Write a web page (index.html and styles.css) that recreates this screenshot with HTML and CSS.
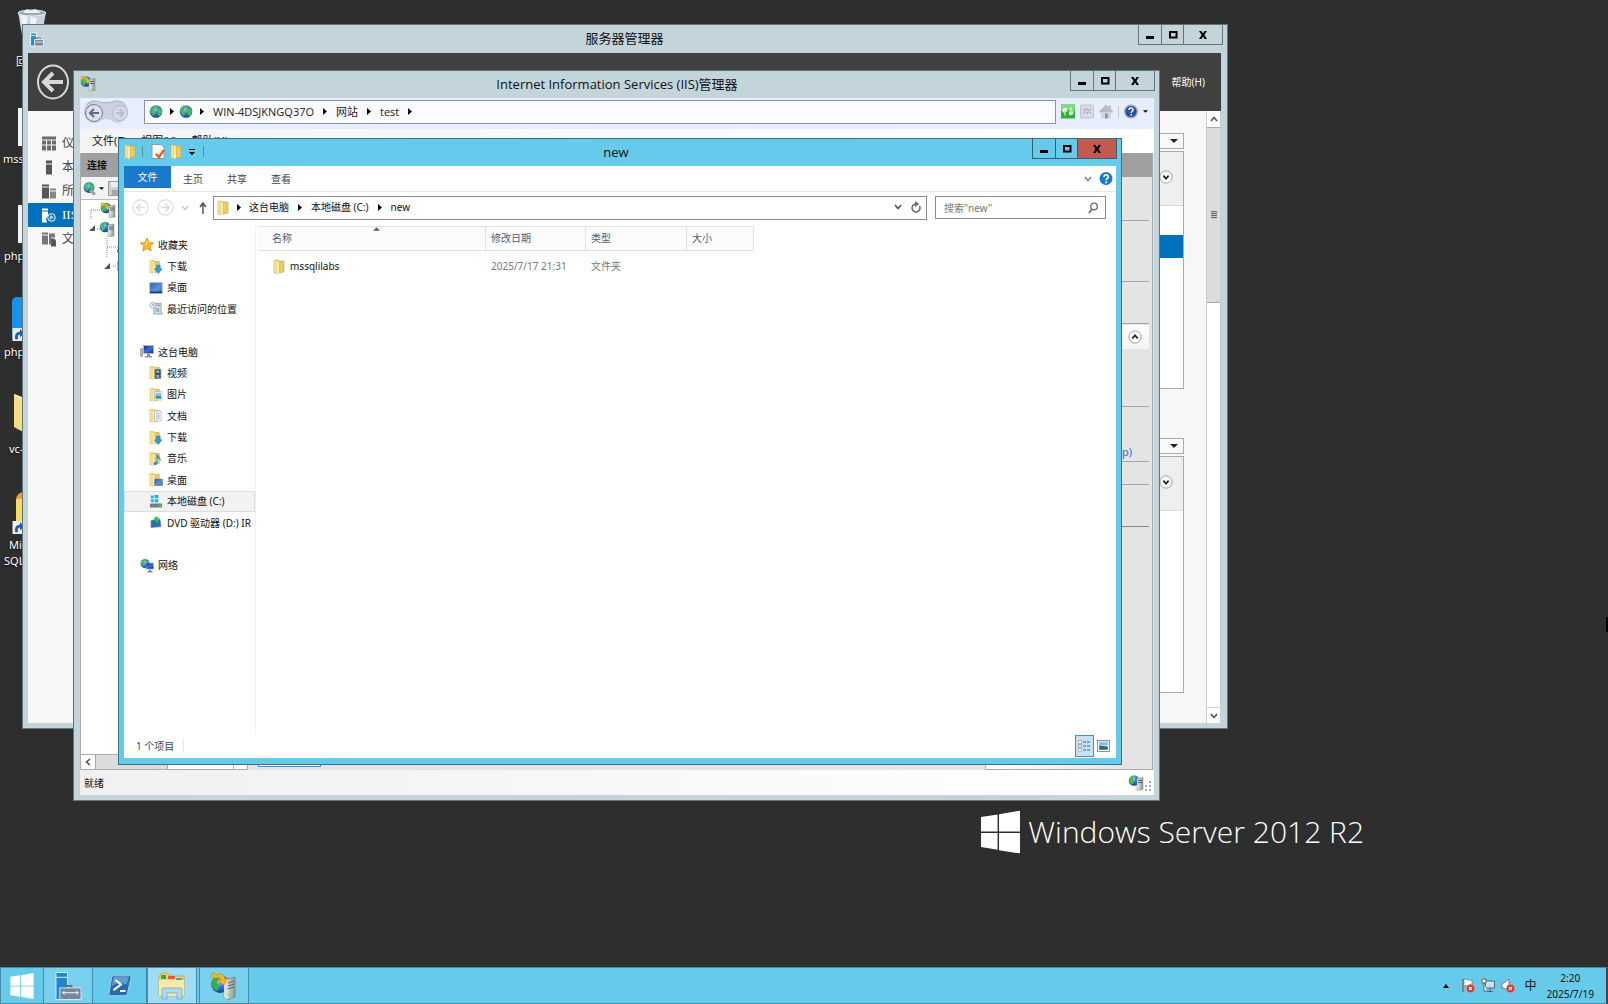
FILE: index.html
```html
<!DOCTYPE html>
<html lang="zh-CN">
<head>
<meta charset="utf-8">
<title>Windows Server 2012 R2</title>
<link rel="stylesheet" href="styles.css">
</head>
<body>
<svg class="defs" aria-hidden="true">
  <defs>
    <linearGradient id="gFolder" x1="0" y1="0" x2="1" y2="0"><stop offset="0" stop-color="#fdf0b0"/><stop offset="1" stop-color="#e2bd55"/></linearGradient>
    <radialGradient id="gGlobe" cx=".35" cy=".3" r=".8"><stop offset="0" stop-color="#9fe0ff"/><stop offset=".5" stop-color="#2f7fd0"/><stop offset="1" stop-color="#0b2f78"/></radialGradient>
    <linearGradient id="gSrv" x1="0" y1="0" x2="1" y2="0"><stop offset="0" stop-color="#f2f4f4"/><stop offset="1" stop-color="#8d9796"/></linearGradient>
    <linearGradient id="gScreen" x1="0" y1="0" x2="1" y2="1"><stop offset="0" stop-color="#0a1fa0"/><stop offset=".5" stop-color="#3f6fd8"/><stop offset="1" stop-color="#0c2a8c"/></linearGradient>
    <linearGradient id="gDesk" x1="0" y1="0" x2="1" y2="1"><stop offset="0" stop-color="#2f5fb4"/><stop offset=".6" stop-color="#5c93e0"/><stop offset="1" stop-color="#2f62b8"/></linearGradient>
    <symbol id="folder" viewBox="0 0 12 15"><path d="M1 1h4l1 1v12l-2 1-3-1z" fill="url(#gFolder)" stroke="#cfae52" stroke-width=".6"/><path d="M6 2h5v11l-5 1z" fill="#e9cb68" stroke="#c9a447" stroke-width=".6"/><path d="M4 3l2-1v12l-2 1z" fill="#fbeeb4"/></symbol>
    <symbol id="globe" viewBox="0 0 14 14"><circle cx="7" cy="7" r="6.300" fill="url(#gGlobe)"/><path d="M2 3c2-2 4-2 5-1 0 2-2 2-2 4 1 1 1 3 0 5-2-1-4-4-3-8zM9 4c2-1 3 0 4 2 0 3-1 4-3 6-1-2-2-3-1-4-1-2-1-3 0-4z" fill="#4dbb45"/></symbol>
    <symbol id="globesrv" viewBox="0 0 16 16"><circle cx="6" cy="6" r="5.300" fill="url(#gGlobe)"/><path d="M2 3c2-1 3-2 4-1-1 2-1 3-1 4 1 1 0 3-1 4-2-1-3-4-2-7z" fill="#4dbb45"/><path d="M9 4l6-1v12l-6 1z" fill="url(#gSrv)" stroke="#7d8584" stroke-width=".5"/><path d="M10 6h4M10 8h4" stroke="#59605f"/><circle cx="12" cy="14" r="1" fill="#7be02a"/></symbol>
    <symbol id="iis" viewBox="0 0 16 16"><use href="#globesrv" width="16" height="16"/><path d="M1 4V1h3v1c3 0 5 1 5 3h1L8 8 5 5h2c0-1-2-2-4-1z" fill="#f5b41d" stroke="#c98708" stroke-width=".3"/></symbol>
    <symbol id="sm" viewBox="0 0 14 14"><path d="M.5.5h6v13h-6z" fill="#2b8ad0" stroke="#e6f3fb"/><path d="M1 3h5" stroke="#bfe0f5"/><path d="M6.500 6.500V5.500h4v1" fill="none" stroke="#65798a"/><path d="M4.500 7h9v6.500h-9z" fill="#75899a" stroke="#f0f6fa" stroke-width=".8"/><path d="M5 9.500h8" stroke="#fff" stroke-width=".7"/></symbol>
    <symbol id="tri" viewBox="0 0 4 7"><path d="M0 0l4 3.500L0 7z"/></symbol>
    <symbol id="down" viewBox="0 0 8 6"><path d="M1 1l3 3.500L7 1" fill="none" stroke="currentColor" stroke-width="1.600"/></symbol>
    <symbol id="tridown" viewBox="0 0 8 4"><path d="M0 0h8L4 4z" fill="currentColor"/></symbol>
    <symbol id="min" viewBox="0 0 10 10"><path d="M1 6h8v3H1z"/></symbol>
    <symbol id="max" viewBox="0 0 10 10"><path d="M2 2h6.500v5.500H2z" fill="none" stroke="#000" stroke-width="2"/></symbol>
    <symbol id="cls" viewBox="0 0 10 10"><path d="M1 1h2.500l1.500 2.500L6.500 1H9L6.400 5 9 9H6.500L5 6.500 3.500 9H1l2.600-4z"/></symbol>
    <symbol id="circdown" viewBox="0 0 16 16"><circle cx="8" cy="8" r="7" fill="#fafafa" stroke="#999"/><path d="M5 6.500L8 10l3-3.500" fill="none" stroke="#222" stroke-width="2"/></symbol>
    <symbol id="shortcut" viewBox="0 0 14 14"><path d="M0 0h14v14H0z" fill="#e8eef4"/><path d="M3 12C2 7 4 4 8 4V1l5 5-5 4V7C6 7 5 9 6 12z" fill="#1c5ba5"/></symbol>
    <symbol id="ffilm" viewBox="0 0 15 15"><use href="#folder" width="12" height="15"/><path d="M6 4h7v10H6z" fill="#39474d"/><path d="M8 5h3v3H8zM8 10h3v3H8z" fill="#79b6d8"/><path d="M7 4v10M12.500 4v10" stroke="#cfd5d8" stroke-dasharray="1 1" stroke-width=".7"/></symbol>
    <symbol id="fpic" viewBox="0 0 15 15"><use href="#folder" width="12" height="15"/><path d="M6 4.500h8v9H6z" fill="#f4f8fa" stroke="#9ba9b0" stroke-width=".6"/><path d="M7 6h6v3H7z" fill="#7fc4e8"/><path d="M7 9h6v3H7z" fill="#3d8f82"/></symbol>
    <symbol id="fdoc" viewBox="0 0 15 15"><use href="#folder" width="12" height="15"/><path d="M6 2.500h7v11H6z" fill="#f7f9fb" stroke="#98a5ae" stroke-width=".6"/><path d="M7.500 5h4M7.500 7h4M7.500 9h4M7.500 11h4" stroke="#7faed4" stroke-width=".8"/></symbol>
    <symbol id="fdown" viewBox="0 0 15 15"><use href="#folder" width="12" height="15"/><path d="M8 6h4v4h2l-4 5-4-5h2z" fill="#2d9ae0" stroke="#1c6cae" stroke-width=".5"/></symbol>
    <symbol id="fmusic" viewBox="0 0 15 15"><use href="#folder" width="12" height="15"/><path d="M9 3c0 2 5 3 3 8 0-3-2-4-3-4v5c0 3-4 3-4 1s2-2 3-2V3z" fill="#2b8fd6"/></symbol>
    <symbol id="fdesk" viewBox="0 0 15 15"><use href="#folder" width="12" height="15"/><path d="M6 7h8.500v7H6z" fill="url(#gDesk)" stroke="#6d7f95" stroke-width=".6"/></symbol>
    <symbol id="desk" viewBox="0 0 15 15"><path d="M1 2.500h13v11H1z" fill="url(#gDesk)" stroke="#7b8da6" stroke-width=".8"/><path d="M1 12h13v1.500H1z" fill="#1d3050"/></symbol>
    <symbol id="star" viewBox="0 0 14 14"><path d="M7 .5l2 4.600 4.700.4-3.600 3.200 1.100 4.800L7 11l-4.200 2.500 1.100-4.800L.3 5.500 5 5.100z" fill="#ffb52e" stroke="#e08a18" stroke-width=".8"/><path d="M7 3l1 3-3 2z" fill="#ffe38a"/></symbol>
    <symbol id="recent" viewBox="0 0 15 15"><path d="M4 2h9v9l1.500 2.500H5V6z" fill="#d4dadd" stroke="#8d979c" stroke-width=".8"/><circle cx="4" cy="4" r="3" fill="#f4f6f7" stroke="#929b9f" stroke-width=".8"/><path d="M7 7h4v4H7z" fill="#8db9d2"/><path d="M4 2.500V4h1.500M8 4h4" stroke="#667" stroke-width=".7" fill="none"/></symbol>
    <symbol id="pc" viewBox="0 0 14 14"><path d="M.5 4h2v8h-2z" fill="#b2bab8" stroke="#76807d" stroke-width=".5"/><path d="M3.500 1h10v8h-10z" fill="url(#gScreen)" stroke="#a7b3be"/><path d="M7 9.500h3v2h2v1.500H5v-1.500h2z" fill="#8b949b"/></symbol>
    <symbol id="drive" viewBox="0 0 15 15"><path d="M2 1h3v3H2zM6 .6h4V4H6zM2 5h3v3H2zM6 5h4v3.400H6z" fill="#1bb3ee"/><path d="M1 10l2-1h9l2 1v4H1z" fill="#6f7f88"/><path d="M1 10l2-1.500h9L14 10z" fill="#c5ced2"/><circle cx="12" cy="12" r="1" fill="#5ff04c"/></symbol>
    <symbol id="dvd" viewBox="0 0 15 15"><path d="M2 5l10-1 1 8-11 1z" fill="#2e6cae" stroke="#8aa9c8" stroke-width=".6"/><path d="M5 5c0-3 2-4 5-4l-1 2h3L8 8 6 4z" fill="#39c24b"/></symbol>
    <symbol id="net" viewBox="0 0 14 14"><use href="#globe" width="10" height="10"/><path d="M6 4.500h7.500v6H6z" fill="url(#gScreen)" stroke="#9cb0c8" stroke-width=".6"/><path d="M9 11h2v1.500h1.500V14h-5v-1.500H9z" fill="#7e8c98"/></symbol>
    <symbol id="winlogo" viewBox="0 0 40 44"><path d="M0 6.500L17 4v17.500H0zM18.500 3.800L40 0v21.500H18.500zM0 23h17v17.300L0 37.500zM18.500 23H40v21l-21.500-3.400z" fill="#fff"/></symbol>
    <symbol id="err" viewBox="0 0 9 9"><circle cx="4.500" cy="4.500" r="4.200" fill="#d8342b" stroke="#f3b1ad" stroke-width=".5"/><path d="M3 3l3 3M6 3L3 6" stroke="#fff" stroke-width="1.200"/></symbol>
    <symbol id="help" viewBox="0 0 14 14"><circle cx="7" cy="7" r="6.500" fill="#1979ca"/><path d="M5 5.500C5 2.500 9.300 2.700 9.300 5.200 9.300 6.800 7.200 7 7.200 8.800" fill="none" stroke="#fff" stroke-width="1.600"/><path d="M6.300 10h1.800v1.700H6.300z" fill="#fff"/></symbol>
    <symbol id="arrowl" viewBox="0 0 16 16"><circle cx="8" cy="8" r="7.200" fill="none" stroke="currentColor" stroke-width="1.100"/><path d="M12 8H5M8 4.500L4.500 8 8 11.500" fill="none" stroke="currentColor" stroke-width="1.600"/></symbol>
  </defs>
</svg>

<main class="desktop">
  <div class="shortcut s1"><svg class="bin" viewBox="0 0 30 44"><path d="M1 3l6 34h16l6-34z" fill="#c4d3df"/><path d="M3 5l4 28 4-25zM13 8l2 28 5-27z" fill="#eef4f8"/><ellipse cx="15" cy="4" rx="14" ry="3" fill="#9aa9b3" stroke="#edf2f5"/><path d="M6 4l4-4 4 2 4-2 6 4z" fill="#eef1f3"/></svg><span>回</span></div>
  <div class="shortcut s2"><i class="paper"></i><span>mss</span></div>
  <div class="shortcut s3"><i class="paper"></i><span>php</span></div>
  <div class="shortcut s4"><i class="blueapp"></i><svg class="lnk"><use href="#shortcut"/></svg><span>php</span></div>
  <div class="shortcut s5"><svg class="bigfolder" viewBox="0 0 20 44"><path d="M0 0l20 8v36L0 33z" fill="#f4dc84"/><path d="M0 0l20 8v4L3 3z" fill="#fff2bd"/></svg><span>vc-</span></div>
  <div class="shortcut s6"><i class="sqlapp"></i><svg class="lnk"><use href="#shortcut"/></svg><span>Mic</span><span class="second">SQL</span></div>
  <i class="edge-mark"></i>
  <div class="brand"><svg viewBox="0 0 40 44"><use href="#winlogo"/></svg><span>Windows Server 2012 R2</span></div>

  <section class="window manager">
    <header class="titlebar">
      <div class="lead"><svg class="i14"><use href="#sm"/></svg></div>
      <h1>服务器管理器</h1>
      <div class="caption"><button aria-label="最小化"><svg><use href="#min"/></svg></button><button aria-label="最大化"><svg><use href="#max"/></svg></button><button class="close" aria-label="关闭"><svg><use href="#cls"/></svg></button></div>
    </header>
    <div class="mbanner">
      <button class="mback" aria-label="返回"><svg viewBox="0 0 34 36"><ellipse cx="17" cy="18" rx="15" ry="16.500" fill="none" stroke="#d8d8d8" stroke-width="2"/><path d="M27 18H9M17 9l-9 9 9 9" fill="none" stroke="#d8d8d8" stroke-width="4"/></svg></button>
      <button class="mhelp">帮助(H)</button>
    </div>
    <div class="mbody">
      <nav class="mside">
        <a href="#d"><svg viewBox="0 0 14 14"><path d="M0 0h14v3H0zM0 4h4v4H0zM5 4h4v4H5zM10 4h4v4h-4zM0 9h4v5H0zM5 9h4v5H5zM10 9h4v5h-4z" fill="#6b6b6b"/></svg>仪</a>
        <a href="#l"><svg viewBox="0 0 14 14"><path d="M4 0h6v3H4zM4 4h6v10H4z" fill="#555"/></svg>本</a>
        <a href="#a"><svg viewBox="0 0 14 14"><path d="M0 0h7v2H0zM0 3h7v11H0z" fill="#555"/><path d="M8 4h6v2H8zM8 7h6v7H8z" fill="#888"/></svg>所</a>
        <a href="#i" class="on"><svg viewBox="0 0 14 14"><path d="M0 0h6v2H0zM0 3h6v4L4 10l1 4H0z" fill="#fff"/><circle cx="9.500" cy="9" r="3.800" fill="none" stroke="#fff"/><path d="M8 10c0-3 3-3 3 0M9 7v4" stroke="#fff" fill="none"/></svg><b>IIS</b></a>
        <a href="#f"><svg viewBox="0 0 14 14"><path d="M0 0h6v2H0zM0 3h6v9H0zM7 1h6v4H9v7H7z" fill="#777"/><path d="M9 6h3l2 2v6H9z" fill="#555"/></svg>文</a>
      </nav>
      <div class="mtiles">
        <div class="combo"><svg><use href="#tridown"/></svg></div>
        <div class="tile first"><div class="thead"><svg><use href="#circdown"/></svg></div><div class="tsel"></div></div>
        <div class="combo later"><svg><use href="#tridown"/></svg></div>
        <div class="tile"><div class="thead"><svg><use href="#circdown"/></svg></div></div>
      </div>
      <div class="vscroll">
        <button aria-label="上"><svg class="flip"><use href="#down"/></svg></button>
        <div class="thumb"><i></i></div>
        <button class="end" aria-label="下"><svg><use href="#down"/></svg></button>
      </div>
    </div>
  </section>

  <section class="window iiswin">
    <header class="titlebar">
      <div class="lead"><svg class="i16"><use href="#iis"/></svg></div>
      <h1>Internet Information Services (IIS)管理器</h1>
      <div class="caption"><button aria-label="最小化"><svg><use href="#min"/></svg></button><button aria-label="最大化"><svg><use href="#max"/></svg></button><button class="close" aria-label="关闭"><svg><use href="#cls"/></svg></button></div>
    </header>
    <div class="inav">
      <svg class="travel" viewBox="0 0 46 26"><path d="M1 12C1 3 8 0 15 2c5 2 11 2 16 0 8-2 14 2 14 10 0 8-6 12-11 12-4 0-6-4-11-4s-7 4-11 4C6 24 1 20 1 12z" fill="#ccd1e2"/><path d="M4 6C8 1 13 2 17 3c4 1 8 1 12 0 5-2 10-1 13 4" stroke="#aab0c4" fill="none"/><circle cx="11" cy="14" r="8.500" fill="#dde1ea" stroke="#747c8b"/><circle cx="37" cy="14" r="7.500" fill="#d4d8e6" stroke="#b4bacb"/><path d="M16 14H8M11 10l-4 4 4 4" stroke="#646b75" stroke-width="2" fill="none"/><path d="M33 14h7M37 10.500l3.500 3.500-3.500 3.500" stroke="#b0b5c4" stroke-width="1.500" fill="none"/></svg>
      <div class="iaddr"><svg class="i14"><use href="#globe"/></svg><svg class="tri"><use href="#tri"/></svg><svg class="i14"><use href="#globe"/></svg><svg class="tri"><use href="#tri"/></svg><span class="host">WIN-4DSJKNGQ37O</span><svg class="tri"><use href="#tri"/></svg><span>网站</span><svg class="tri"><use href="#tri"/></svg><span>test</span><svg class="tri"><use href="#tri"/></svg></div>
      <div class="itools">
        <svg class="i14" viewBox="0 0 14 14"><path d="M0 0h14v14H0z" fill="#26b62d"/><path d="M0 0h14v6H0z" fill="#7fdc7a"/><path d="M2 8V6c0-2 3-3 4-1M4 6v5M2 7l2-2 2 2M12 6v2c0 2-3 3-4 1M10 3v6M8 7l2 3 2-3" fill="none" stroke="#fff" stroke-width="1.100"/></svg>
        <svg class="i14" viewBox="0 0 14 14"><rect x=".5" y=".5" width="13" height="13" rx="1" fill="#d9dbe0" stroke="#c2c5cc"/><path d="M3 4l4 5M7 4L3 9M7 4l4 5M11 4L7 9" stroke="#aeb1b8" stroke-width="1.200"/></svg>
        <svg class="i14" viewBox="0 0 14 14"><path d="M0 7l7-7 3 3V1h2v4l2 2v1H0z" fill="#b8bbc2"/><path d="M2 8h10v6H2z" fill="#d2d4d9"/><path d="M6 9h3v5H6z" fill="#96999f"/></svg>
        <i></i>
        <svg class="i14" viewBox="0 0 14 14"><circle cx="7" cy="7" r="6.300" fill="#2450b4" stroke="#a4a8b2" stroke-width="1.400"/><path d="M5 5.500C5 3 9 3 9 5.300 9 7 7.200 7 7.200 8.500" fill="none" stroke="#fff" stroke-width="1.500"/><path d="M6.400 9.500h1.600V11H6.400z" fill="#fff"/></svg>
        <svg class="dd"><use href="#tridown"/></svg>
      </div>
    </div>
    <div class="imenu"><span>文件(F)</span><span>视图(V)</span><span>帮助(H)</span></div>
    <div class="ibody">
      <div class="conn">
        <h2>连接</h2>
        <div class="ctool"><svg class="i14" viewBox="0 0 14 14"><use href="#globe" width="12" height="12"/><path d="M7 9l5 4" stroke="#9ba4b5" stroke-width="3"/></svg><svg class="dd"><use href="#tridown"/></svg><svg class="save" viewBox="0 0 15 15"><path d="M.5.5h14v14H.5z" fill="#cfcfcf" stroke="#999"/><path d="M3 1h9v5H3z" fill="#eee"/><path d="M4 9h7v5H4z" fill="#a5a5a5"/></svg></div>
        <svg class="tree" viewBox="0 0 38 90"><path d="M10 10h10M10 10v10M16 29h4M26 38v20M26 47h12M32 66h5" stroke="#888" stroke-dasharray="1 1" fill="none"/><use href="#iis" x="19" y="2" width="16" height="16"/><use href="#globesrv" x="18" y="21" width="16" height="16"/><path d="M14 25v6H8zM29 63v6h-6z" fill="#555"/><circle cx="38" cy="51" r="2" fill="#d33"/><path d="M36 61h3v10h-3z" fill="#d5b75c"/></svg>
        <div class="hscroll"><button aria-label="左"><svg class="left"><use href="#down"/></svg></button><i></i><b></b></div>
      </div>
      <div class="imid"><div class="viewtab"></div></div>
      <div class="actions">
        <h2></h2>
        <div class="alist">
          <hr class="a1"><hr class="a2"><hr class="a3">
          <div class="agroup"><svg><use href="#circdown"/></svg></div>
          <hr class="a4"><a href="#help">p)</a><hr class="a5"><hr class="a6"><hr class="a7">
        </div>
      </div>
    </div>
    <footer class="istatus"><span>就绪</span><svg class="i16"><use href="#globesrv"/></svg><svg class="grip" viewBox="0 0 8 10"><path d="M5 0h2v2H5zM1 4h2v2H1zM5 4h2v2H5zM1 8h2v2H1zM5 8h2v2H5z" fill="#aaa"/></svg></footer>
  </section>

  <section class="window explorer">
    <header class="titlebar">
      <div class="lead quick"><svg class="fold"><use href="#folder"/></svg><i></i><svg class="i14" viewBox="0 0 14 15"><path d="M1 .5h9l3 3v11H1z" fill="#fff" stroke="#8b9aa5"/><path d="M5 10l3 3 5-7" fill="none" stroke="#e0633a" stroke-width="2.500"/></svg><svg class="fold"><use href="#folder"/></svg><svg class="qdd" viewBox="0 0 6 6"><path d="M0 0h6v1H0zM0 3h6L3 6z"/></svg><i></i></div>
      <h1>new</h1>
      <div class="caption"><button aria-label="最小化"><svg><use href="#min"/></svg></button><button aria-label="最大化"><svg><use href="#max"/></svg></button><button class="close" aria-label="关闭"><svg><use href="#cls"/></svg></button></div>
    </header>
    <div class="ribbon"><button class="file">文件</button><button>主页</button><button>共享</button><button>查看</button><div class="rright"><svg class="chev"><use href="#down"/></svg><svg class="i14"><use href="#help"/></svg></div></div>
    <div class="eaddr">
      <svg class="nb"><use href="#arrowl"/></svg><svg class="nb rev"><use href="#arrowl"/></svg><svg class="chev faint"><use href="#down"/></svg>
      <svg class="up" viewBox="0 0 8 12"><path d="M4 12V2M1 5l3-4 3 4" fill="none" stroke="#555" stroke-width="1.500"/></svg>
      <div class="path"><svg class="fold"><use href="#folder"/></svg><svg class="tri"><use href="#tri"/></svg><span>这台电脑</span><svg class="tri"><use href="#tri"/></svg><span>本地磁盘 (C:)</span><svg class="tri"><use href="#tri"/></svg><span>new</span><svg class="chev pushed"><use href="#down"/></svg><svg class="refresh" viewBox="0 0 10 12"><path d="M8.500 5A4 4 0 1 1 5 3" fill="none" stroke="#666" stroke-width="1.500"/><path d="M4 0l4 3-4 3z" fill="#666"/></svg></div>
      <label class="search"><input type="text" placeholder='搜索"new"' aria-label="搜索"><svg viewBox="0 0 10 12"><circle cx="6" cy="4.500" r="3.300" fill="none" stroke="#666" stroke-width="1.300"/><path d="M4 7L1 11" stroke="#666" stroke-width="1.600"/></svg></label>
    </div>
    <div class="ebody">
      <nav class="places"><div class="plist">
        <a class="top" href="#p"><svg><use href="#star"/></svg>收藏夹</a>
        <a href="#p"><svg><use href="#fdown"/></svg>下载</a>
        <a href="#p"><svg><use href="#desk"/></svg>桌面</a>
        <a href="#p"><svg><use href="#recent"/></svg>最近访问的位置</a>
        <i></i>
        <a class="top" href="#p"><svg><use href="#pc"/></svg>这台电脑</a>
        <a href="#p"><svg><use href="#ffilm"/></svg>视频</a>
        <a href="#p"><svg><use href="#fpic"/></svg>图片</a>
        <a href="#p"><svg><use href="#fdoc"/></svg>文档</a>
        <a href="#p"><svg><use href="#fdown"/></svg>下载</a>
        <a href="#p"><svg><use href="#fmusic"/></svg>音乐</a>
        <a href="#p"><svg><use href="#fdesk"/></svg>桌面</a>
        <a class="sel" href="#p"><svg><use href="#drive"/></svg>本地磁盘 (C:)</a>
        <a href="#p"><svg><use href="#dvd"/></svg>DVD 驱动器 (D:) IR</a>
        <i></i>
        <a class="top" href="#p"><svg><use href="#net"/></svg>网络</a>
      </div></nav>
      <div class="files">
        <table>
          <thead><tr><th class="c1">名称<svg class="sort"><use href="#tridown"/></svg></th><th class="c2">修改日期</th><th class="c3">类型</th><th class="c4">大小</th></tr></thead>
          <tbody><tr><td class="name"><svg class="fold"><use href="#folder"/></svg>mssqlilabs</td><td>2025/7/17 21:31</td><td>文件夹</td><td></td></tr></tbody>
        </table>
      </div>
    </div>
    <footer class="estatus"><span>1 个项目</span><div class="views"><button class="on" aria-label="详细信息"><svg viewBox="0 0 13 12"><path d="M.5.5h3v3h-3zM.5 4.500h3v3h-3zM.5 8.500h3v3h-3z" fill="#fff" stroke="#999" stroke-width=".7"/><path d="M1.500 5.500h1v1h-1z" fill="#d44"/><path d="M5 2h3M9 2h3M5 6h3M9 6h3M5 10h3M9 10h3" stroke="#4c6078"/></svg></button><button aria-label="大图标"><svg viewBox="0 0 12 11"><path d="M.5.5h11v10H.5z" fill="#fff" stroke="#8695a8"/><path d="M2 2h8v3H2z" fill="#7cc0ec"/><path d="M2 5l8 1v3H2z" fill="#2d6d63"/></svg></button></div></footer>
  </section>

  <footer class="taskbar">
    <button class="t-start" aria-label="开始"><svg viewBox="0 0 40 44"><use href="#winlogo"/></svg></button>
    <button class="t-sm" aria-label="服务器管理器"><svg viewBox="0 0 28 30"><path d="M1 1h12v28H1z" fill="#1d86d8" stroke="#d8effb"/><path d="M1 6h12" stroke="#d8effb"/><path d="M11 17v-2h6v2" fill="none" stroke="#5f7386" stroke-width="2"/><path d="M5 17h22v12H5z" fill="#75899c" stroke="#d8e8f0"/><path d="M8 22h16M10 20l-2 2 2 2M22 20l2 2-2 2" stroke="#fff" fill="none"/></svg></button>
    <button class="t-ps" aria-label="PowerShell"><svg viewBox="0 0 26 24"><path d="M6 1h17q2 0 2 2l-4 18q-1 2-3 2H3q-2 0-2-2L4 3q1-2 2-2z" fill="#2a6bb0" stroke="#a7cfe8"/><path d="M6 2h17l-3 9C14 8 8 9 4 13z" fill="#5d9dd2"/><path d="M8 6l6 5-8 6M13 18h6" stroke="#fff" stroke-width="2.200" fill="none"/></svg></button>
    <button class="t-ex on" aria-label="文件资源管理器"><svg viewBox="0 0 28 28"><path d="M1 4l3-3h6l2 3h14v20H1z" fill="#f0cf70" stroke="#c79e3c" stroke-width=".7"/><path d="M3 3h5v4H3z" fill="#2fae4a"/><path d="M10 4h7v3h-7z" fill="#e8573f"/><path d="M18 6h6v3h-6z" fill="#3da4ea"/><path d="M1 8h25v16H1z" fill="#fbe9a3"/><path d="M4 27V18q0-2 2-2h16q2 0 2 2v9h-5v-6H9v6z" fill="#a9dcf4" stroke="#5ca7cc" stroke-width=".7"/></svg></button>
    <button class="t-iis" aria-label="IIS"><svg viewBox="0 0 28 30"><circle cx="10" cy="13" r="9" fill="url(#gGlobe)"/><path d="M3 8c2-3 5-3 7-2 0 3-3 3-3 6 2 2 2 5 0 8-4-2-6-7-4-12z" fill="#3fae3c"/><path d="M14 9l11-3v20l-8 3-3-3z" fill="url(#gSrv)" stroke="#747b7b" stroke-width=".7"/><path d="M14 9l3 1v19l-3-3z" fill="#d9dedf"/><path d="M18 12l6-2M18 15l6-2M18 18l6-2" stroke="#5b6363"/><circle cx="20" cy="24" r="1.200" fill="#77df36"/><path d="M1 6l2-5 3 3c4-2 8-1 9 4l3-1-4 7-6-4 3-1c-1-3-3-3-5-2z" fill="#f6b722" stroke="#c98809" stroke-width=".6"/></svg></button>
    <div class="tray">
      <svg class="trup" viewBox="0 0 6 4"><path d="M3 0l3 4H0z"/></svg>
      <svg class="i14" viewBox="0 0 14 15"><path d="M2 1v13" stroke="#777" stroke-width="1.500"/><path d="M3 1c3 0 4 2 8 1v6C8 9 6 7 3 8z" fill="#fff" stroke="#777" stroke-width=".7"/><use href="#err" x="5" y="6" width="9" height="9"/></svg>
      <svg class="i14" viewBox="0 0 14 15"><path d="M4.500 3h9v7h-9z" fill="#bfe7f7" stroke="#54656e"/><path d="M1 1h4v4H1zM3 5v8h3M9 10v3M6 13.500h6" fill="#fff" stroke="#54656e"/></svg>
      <svg class="i14" viewBox="0 0 14 15"><path d="M1 5h2l5-4v13l-5-4H1z" fill="#fff" stroke="#667" stroke-width=".8"/><use href="#err" x="5" y="6" width="9" height="9"/></svg>
      <span class="ime">中</span>
      <time><span>2:20</span><span>2025/7/19</span></time>
    </div>
  </footer>
</main>
</body>
</html>
```
FILE: styles.css
```css
* { box-sizing: border-box; }
body { margin: 0; font: 10px/14px "Noto Sans", "Noto Sans CJK SC", sans-serif; color: #111; }
button { font: inherit; padding: 0; margin: 0; border: 0; background: none; color: inherit; display: flex; align-items: center; justify-content: center; }
a { color: inherit; text-decoration: none; }
h1, h2 { margin: 0; font-weight: 400; }
svg { display: block; flex: none; }
span, a, h1, h2 { white-space: nowrap; }
.defs { position: absolute; width: 0; height: 0; }
.i14 { width: 14px; height: 15px; }
.i16 { width: 16px; height: 17px; }
.tri { width: 4px; height: 7px; }
.fold { width: 12px; height: 15px; }
.chev { width: 8px; height: 6px; color: #888; }
.dd { width: 5px; height: 3px; color: #000; }

.desktop { position: relative; height: 100vh; overflow: hidden; background: #2e2e2e; }

/* Desktop shortcuts */
.shortcut { position: absolute; left: 0; width: 60px; height: 88px; color: #fff; font-size: 11px; text-shadow: 0 1px 2px #000; }
.shortcut > * { position: absolute; }
.shortcut span { top: 62px; left: 4px; }
.shortcut .second { top: 78px; }
.s1 { top: -7px; } .s2 { top: 90px; } .s3 { top: 187px; } .s4 { top: 283px; } .s5 { top: 380px; } .s6 { top: 476px; }
.s1 span { left: 16px; } .s5 span, .s6 span { left: 9px; } .s6 .second { left: 4px; } .s2 span { left: 3px; }
.bin { left: 17px; top: 16px; width: 30px; height: 44px; }
.paper { left: 18px; top: 18px; width: 28px; height: 38px; background: #f4f4f4; }
.blueapp { left: 12px; top: 14px; width: 40px; height: 44px; border-radius: 5px; background: #1793ea; }
.sqlapp { left: 16px; top: 16px; width: 30px; height: 34px; border-radius: 8px 8px 0 0; background: linear-gradient(#f39b43 6px, #f8dc62 8px); }
.lnk { left: 12px; top: 45px; width: 14px; height: 13px; }
.bigfolder { left: 14px; top: 14px; width: 20px; height: 44px; }
.edge-mark { position: absolute; right: 0; bottom: 372px; width: 2px; height: 15px; background: #000; }
.brand { position: absolute; right: 244px; bottom: 149px; display: flex; align-items: center; gap: 8px; color: #fff; font-family: "Open Sans", sans-serif; font-size: 30px; font-weight: 300; line-height: 46px; }
.brand svg { width: 39px; height: 44px; }

/* Window frame */
.window { position: absolute; display: flex; flex-direction: column; border: 1px solid #63747b; background: #c3d5db; padding: 0 5px 5px; }
.manager { left: 22px; top: 24px; right: 380px; bottom: 275px; padding-right: 6px; }
.iiswin { left: 73px; top: 70px; right: 448px; bottom: 203px; padding-left: 6px; }
.explorer { left: 118px; top: 138px; right: 486px; bottom: 239px; background: #66caea; border-color: #3f6f80; padding-bottom: 6px; }
.titlebar { flex: none; height: 27px; display: grid; grid-template-columns: 1fr auto 1fr; align-items: center; }
.manager .titlebar { height: 28px; }
.titlebar h1 { font-family: "Open Sans", "Noto Sans CJK SC", sans-serif; font-size: 13px; line-height: 20px; padding-bottom: 2px; }
.explorer h1 { padding-right: 8px; }
.lead { display: flex; align-items: center; padding-left: 2px; }
.iiswin .lead { padding: 0 0 2px; }
.quick { padding: 0 0 2px; }
.quick i { width: 1px; height: 11px; background: #4c8fa8; margin: 0 8px 0 6px; }
.quick .i14 { margin-right: 5px; }
.qdd { width: 6px; height: 6px; margin: 0 2px 0 7px; }
.caption { justify-self: end; align-self: start; display: flex; height: 20px; border: 1px solid #63747b; border-top: 0; margin-right: -1px; }
.manager .caption { margin-right: -2px; }
.caption button { width: 23px; border-right: 1px solid #63747b; }
.caption button:nth-child(2) { width: 22px; }
.caption .close { width: 38px; border-right: 0; }
.caption svg { width: 10px; height: 10px; }
.explorer .caption { border-color: #36606f; }
.explorer .caption button { border-color: #36606f; }
.explorer .close { background: #c25a50; }

/* Server manager */
.mbanner { flex: none; height: 58px; background: #404040; display: flex; align-items: center; justify-content: space-between; padding: 0 16px 0 8px; color: #fff; }
.mback svg { width: 34px; height: 36px; }
.mhelp { font-size: 10px; }
.mbody { flex: 1; min-height: 0; display: flex; background: #f7f7f7; }
.mside { width: 180px; padding-top: 20px; font-size: 12px; color: #444; }
.mside a { display: flex; align-items: center; gap: 6px; height: 24px; padding-left: 14px; }
.mside svg { width: 14px; height: 15px; }
.mside b { font: 13px "Liberation Serif", serif; }
.mside .on { background: #0072bc; color: #fff; }
.mtiles { flex: 1; padding: 22px 22px 30px 0; display: flex; flex-direction: column; }
.combo { flex: none; height: 16px; border: 1px solid #aaa; background: #f9f9f9; display: flex; justify-content: flex-end; align-items: center; padding-right: 5px; margin-bottom: 2px; color: #222; }
.combo.later { margin-top: 49px; }
.combo svg { width: 8px; height: 4px; }
.tile { flex: 1; min-height: 0; border: 1px solid #aaa; background: #fff; }
.tile.first { flex: none; height: 238px; }
.thead { height: 54px; background: #efefef; border-bottom: 1px solid #ddd; display: flex; align-items: center; justify-content: flex-end; padding: 0 10px 4px 0; }
.thead svg { width: 14px; height: 16px; }
.tsel { margin-top: 29px; height: 23px; background: #0072bc; }
.vscroll { width: 15px; display: flex; flex-direction: column; background: #fff; border: 1px solid #ccc; border-width: 0 1px; }
.vscroll button { height: 16px; color: #555; }
.vscroll .end { margin-top: auto; border-top: 1px solid #ccc; }
.vscroll svg { width: 8px; height: 6px; }
.flip { transform: rotate(180deg); }
.left { transform: rotate(90deg); }
.thumb { height: 176px; background: #dcdcdc; border: 1px solid #aaa; border-width: 1px 0; display: grid; place-items: center; }
.thumb i { width: 6px; height: 8px; background: repeating-linear-gradient(#666 0 1px, #ccc 1px 2px); }

/* IIS manager */
.inav { flex: none; height: 31px; display: flex; align-items: center; background: #e8eefe; padding: 0 6px 4px 3px; }
.travel { width: 46px; height: 26px; }
.iaddr { flex: 1; height: 24px; margin: 0 5px 0 15px; border: 1px solid #8d929b; background: #fafbff; display: flex; align-items: center; padding-left: 4px; color: #222; font-family: "Open Sans", "Noto Sans CJK SC", sans-serif; }
.iaddr .tri { margin: 0 5px 0 7px; }
.iaddr .host { padding-left: 4px; }
.iaddr span { font-size: 11px; }
.iaddr span + .tri { margin: 0 9px; }
.itools { display: flex; align-items: center; gap: 5px; }
.itools i { width: 1px; height: 12px; background: #c5c8d0; }
.imenu { flex: none; height: 24px; background: linear-gradient(90deg, #f4f4f4, #fff); display: flex; align-items: center; gap: 15px; padding-left: 12px; }
.imenu span { font-size: 11px; }
.ibody { flex: 1; min-height: 0; display: flex; background: #e4e4e6; }
.conn { width: 168px; display: flex; flex-direction: column; background: #fff; border: 1px solid #aaa; border-top: 0; }
.ibody h2 { flex: none; height: 24px; background: #a0a0a0; font-size: 10px; font-weight: 700; line-height: 24px; padding-left: 6px; }
.ctool { flex: none; height: 23px; display: flex; align-items: center; gap: 2px; padding-left: 2px; background: #f3f3f3; border-bottom: 1px solid #bbb; }
.save { width: 15px; height: 15px; margin-left: 2px; }
.tree { width: 38px; height: 90px; }
.hscroll { margin-top: auto; height: 15px; display: flex; border-top: 1px solid #aaa; }
.hscroll button { width: 14px; color: #555; }
.hscroll svg { width: 8px; height: 6px; }
.hscroll i { width: 73px; background: #dcdcdc; border: 1px solid #aaa; border-width: 0 1px; }
.hscroll b { width: 66px; border-right: 1px solid #aaa; }
.imid { flex: 1; display: flex; align-items: flex-end; padding: 0 0 3px 10px; }
.viewtab { width: 63px; height: 20px; border: 1px solid #3c91f0; background: #fff; }
.actions { width: 168px; margin-right: 1px; display: flex; flex-direction: column; border: 1px solid #aaa; border-top: 0; border-left-color: #bbb; background: linear-gradient(90deg, #fff, #e4e4e4 140px); }
.alist { padding-right: 3px; }
.alist hr { margin: 0; border: 0; height: 1px; background: #a5a5a5; }
.alist .a1 { margin-top: 43px; }
.alist .a2 { margin-top: 60px; }
.alist .a3 { margin-top: 41px; }
.agroup { height: 24px; margin-top: 1px; background: linear-gradient(#fff, #f3f3f3); display: flex; align-items: center; justify-content: flex-end; padding-right: 7px; }
.agroup svg { width: 14px; height: 16px; transform: rotate(180deg); }
.alist .a4 { margin-top: 57px; }
.alist a { display: block; margin-top: 37px; padding: 0 17px 1px 0; text-align: right; color: #2a6fd0; font-size: 11px; line-height: 16px; }
.alist .a6 { margin-top: 22px; }
.alist .a7 { margin-top: 41px; background: #888; }
.istatus { flex: none; height: 25px; display: flex; align-items: center; padding: 0 2px 0 4px; background: linear-gradient(90deg, #f0f0f0, #fff); }
.istatus .i16 { margin-left: auto; }
.grip { width: 8px; height: 10px; align-self: flex-end; margin-bottom: 4px; }

/* Explorer */
.ribbon { flex: none; height: 26px; display: flex; background: #fff; border-bottom: 1px solid #e6e6e6; color: #444; }
.ribbon button { width: 44px; }
.ribbon .file { width: 47px; height: 22px; background: #1979ca; color: #fff; }
.rright { margin-left: auto; display: flex; align-items: center; gap: 7px; padding-right: 3px; }
.eaddr { flex: none; height: 31px; display: flex; align-items: center; background: #fff; padding: 0 10px 0 8px; }
.nb { width: 17px; height: 17px; color: #ddd; margin-right: 8px; }
.rev { transform: scaleX(-1); }
.faint { color: #ccc; margin: 0 10px 0 -1px; }
.up { width: 8px; height: 12px; margin-right: 6px; }
.path { flex: 1; height: 24px; border: 1px solid #8c8c8c; display: flex; align-items: center; padding: 0 5px 1px 3px; }
.path .tri { margin: 0 8px; }
.path span + .tri { margin: 0 9px; }
.path .chev { margin-left: auto; margin-right: 9px; color: #555; }
.refresh { width: 10px; height: 12px; }
.search { width: 171px; height: 23px; margin-left: 8px; border: 1px solid #8c8c8c; display: flex; align-items: center; padding: 0 7px 0 8px; }
.search input { flex: 1; min-width: 0; border: 0; padding: 0; outline: 0; font: inherit; background: none; }
.search input::placeholder { color: #777; opacity: 1; }
.search svg { width: 10px; height: 12px; }
.ebody { flex: 1; min-height: 0; display: flex; background: #fff; padding-top: 3px; }
.places { width: 132px; border-right: 1px solid #f0f0f0; padding-top: 8px; overflow: hidden; }
.plist { display: grid; grid-auto-rows: 1fr; height: 342px; }
.places a { display: flex; align-items: center; gap: 4px; padding-left: 24px; overflow: hidden; border: 1px solid transparent; }
.places .top { padding-left: 15px; }
.places svg { width: 14px; height: 15px; }
.places .sel { background: #f2f2f2; border-color: #ddd; }
.files { flex: 1; padding-left: 2px; }
.files table { border-collapse: separate; border-spacing: 0; table-layout: fixed; width: 496px; }
.files th { height: 25px; padding: 0 0 2px 5px; text-align: left; font-weight: 400; color: #4c607a; background: #fcfcfc; border: 1px solid #e2e2e2; border-left: 0; position: relative; }
.c1 { width: 228px; } .c2 { width: 100px; } .c3 { width: 101px; } .c4 { width: 67px; }
.files th.c1 { padding-left: 14px; }
.sort { position: absolute; left: 115px; top: 0; width: 7px; height: 4px; color: #4c607a; transform: rotate(180deg); }
.files td { height: 30px; padding: 0 0 0 5px; color: #777; }
.files td.name { color: #111; display: flex; align-items: center; gap: 5px; padding-left: 15px; }
.estatus { flex: none; height: 24px; display: flex; align-items: center; justify-content: space-between; background: #fff; padding: 0 6px 0 12px; color: #39465f; }
.estatus span { padding-right: 9px; border-right: 1px solid #e8e8e8; }
.views { display: flex; gap: 3px; }
.views button { width: 13px; height: 22px; }
.views .on { width: 19px; background: #c4e2f6; border: 1px solid #5a87b4; }
.views svg { width: 13px; height: 12px; }

/* Taskbar */
.taskbar { position: absolute; left: 0; right: 0; bottom: 0; height: 37px; display: flex; background: #66caea; border: 1px solid #4a8aa0; border-right: 2px solid #444; }
.taskbar button { border-right: 1px solid #3f8fac; }
.t-start { width: 43px; } .t-sm { width: 49px; } .t-ps { width: 54px; } .t-ex { width: 50px; }
.t-start svg { width: 24px; height: 26px; }
.t-sm svg { width: 27px; height: 30px; }
.t-ps svg { width: 24px; height: 23px; }
.t-ex svg { width: 28px; height: 28px; }
.taskbar .t-iis { width: 50px; margin-left: 2px; border-left: 1px solid #3f8fac; }
.t-iis svg { width: 28px; height: 30px; }
.taskbar .t-sm, .taskbar .t-iis { background: #78d0ed; }
.taskbar .on { background: #a0dcf3; border-left: 1px solid #3f8fac; }
.tray { margin-left: auto; display: flex; align-items: center; gap: 6px; padding-right: 12px; }
.trup { width: 6px; height: 4px; margin-right: 6px; }
.ime { font-size: 12px; margin-left: 4px; }
.tray time { display: flex; flex-direction: column; text-align: center; line-height: 16px; margin-left: 4px; }
.tray time span { font-size: 10px; }
```
